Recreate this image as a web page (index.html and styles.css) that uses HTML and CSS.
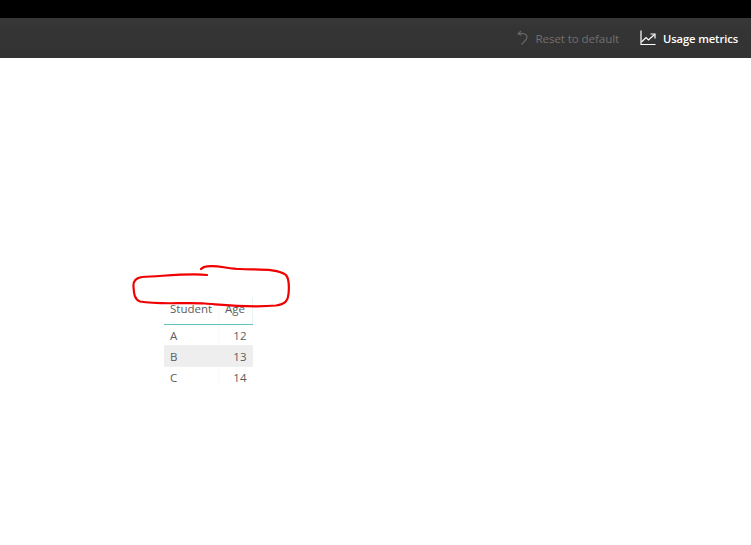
FILE: index.html
```html
<!DOCTYPE html>
<html lang="en">
<head>
<meta charset="utf-8">
<title>Report</title>
<link rel="stylesheet" href="styles.css">
</head>
<body>
<div class="topbar"></div>
<div class="toolbar">
  <button class="tool tool-disabled">
    <svg class="icon-reset" width="14" height="16" viewBox="0 0 14 16" fill="none" stroke="#666" stroke-width="1.2"><path d="M5 1 L2 3.800 L5.500 5.200"/><path d="M2.200 3.800 C6 2.800 11 3.600 11 7 C11 10 8 11.500 5.500 14.500"/></svg>
    <span>Reset to default</span>
  </button>
  <button class="tool tool-active">
    <svg class="icon-metrics" width="16" height="16" viewBox="0 0 16 16" fill="none" stroke="#fff" stroke-width="1.200"><path d="M1 .5 V14.500 H15.500"/><path d="M1.500 12 L6 7.500 L8.500 10 L14.500 4.500"/><path d="M10.500 4 H15 V8.500"/></svg>
    <span>Usage metrics</span>
  </button>
</div>
<main class="canvas">
  <table class="visual">
    <thead><tr><th class="name">Student</th><th class="age">Age</th></tr></thead>
    <tbody>
      <tr><td class="name">A</td><td class="age">12</td></tr>
      <tr class="alt"><td class="name">B</td><td class="age">13</td></tr>
      <tr><td class="name">C</td><td class="age">14</td></tr>
    </tbody>
  </table>
  <svg class="scribble" width="751" height="487" viewBox="0 58 751 487" fill="none" stroke="#f00000" stroke-width="2.200" stroke-linecap="round" stroke-linejoin="round"><path d="M207 275 C190 273 165 276 142 277 C135 278 133 282 133.500 287 C134 293 134 299 140 301.500 C160 305 185 302 205 303.500 C225 305 250 308 276 305.500 C286 304 288 300 288.500 294 C289 288 290 280 286 275 C278 268 255 270 240 269 C228 269 214 264 204 267 L201 269"/></svg>
</main>
</body>
</html>
```
FILE: styles.css
```css
* { box-sizing: border-box; }
html, body { margin: 0; height: 100%; background: #fff; overflow: hidden; }
body { font-family: "Open Sans", "Noto Sans", sans-serif; }
.topbar { height: 18px; background: #000; }
.toolbar {
  height: 40px;
  background: linear-gradient(#383838, #343434 30%, #333);
  display: flex;
  justify-content: flex-end;
  align-items: center;
  gap: 21px;
  padding-right: 13px;
}
.tool {
  display: flex;
  align-items: center;
  background: none;
  border: 0;
  padding: 0;
  font: inherit;
}
.tool-disabled { color: #707070; gap: 6px; font-size: 11.600px; letter-spacing: -.1px; }
.tool-active { color: #fff; font-weight: 600; gap: 7px; font-size: 11.200px; letter-spacing: -.1px; }
.canvas { position: relative; height: 487px; }
.visual {
  position: absolute;
  left: 164px;
  top: 240px;
  width: 89px;
  border-collapse: collapse;
  table-layout: fixed;
  font-size: 11.500px;
  color: #5c5c5c;
}
.visual th { height: 26px; font-weight: 400; border-bottom: 1px solid #5fc4bf; padding: 0 7px 4px 6px; }
.visual td { height: 21px; padding: 1px 6px 0; border-bottom: 1px solid #f0f0f0; }
.visual tbody tr:last-child td { border-bottom: 0; }
.visual .name { width: 54px; text-align: left; }
.visual .age { text-align: right; border-left: 1px solid #f8fbfb; border-right: 1px solid #eaf4f4; }
.visual tbody .age { border-right: 0; }
.visual .alt td { background: #eee; border-left-color: #eee; }
.scribble { position: absolute; left: 0; top: 0; pointer-events: none; }
```
